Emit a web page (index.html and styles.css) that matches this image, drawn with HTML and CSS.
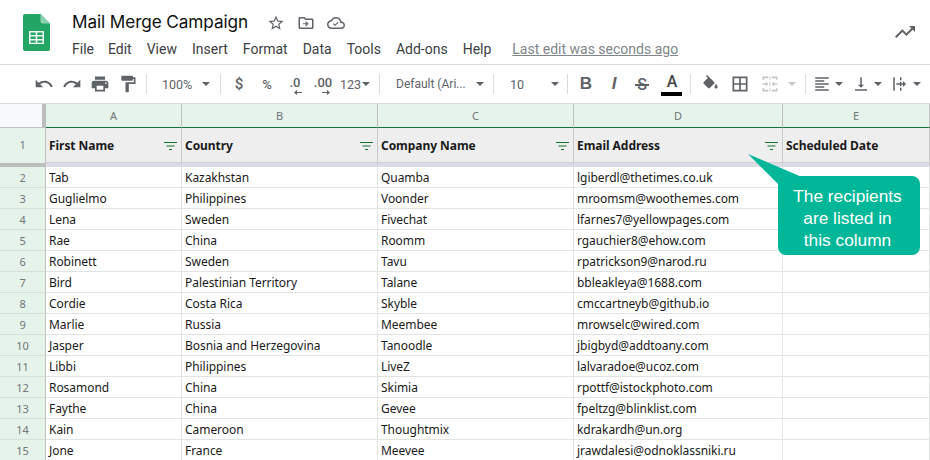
FILE: index.html
```html
<!DOCTYPE html>
<html lang="en">
<head>
  <meta charset="UTF-8">
  <title>Mail Merge Campaign</title>
  <link rel="stylesheet" href="styles.css">
</head>
<body>
  <header class="topbar">
    <svg class="logo" width="27" height="37" viewBox="0 0 27 37">
      <path d="M2 0h15.500l9.500 9.500v25.500a2 2 0 0 1-2 2h-23a2 2 0 0 1-2-2v-33a2 2 0 0 1 2-2z" fill="#23a566"/>
      <path d="M17.500 0l9.500 9.500h-7.500a2 2 0 0 1-2-2z" fill="#8ed1b1"/>
      <path d="M6 17h15v13h-15z M7.500 18.500v2.500h5.200v-2.500z M14.300 18.500v2.500h5.200v-2.500z M7.500 22.500v2.500h5.200v-2.500z M14.300 22.500v2.500h5.200v-2.500z M7.500 26.500v2.200h5.200v-2.200z M14.300 26.500v2.200h5.200v-2.200z" fill="#f1f8f4" fill-rule="evenodd"/>
    </svg>
    <div class="doc">
      <div class="title-row">
        <h1>Mail Merge Campaign</h1>
        <svg class="title-icon" width="18" height="18" viewBox="0 0 24 24"><path d="M22 9.240l-7.190-.62L12 2 9.190 8.630 2 9.240l5.460 4.730L5.820 21 12 17.270 18.180 21l-1.630-7.030L22 9.240zM12 15.400l-3.760 2.270 1-4.280-3.320-2.880 4.380-.38L12 6.100l1.710 4.040 4.380.38-3.320 2.880 1 4.280L12 15.400z"/></svg>
        <svg class="title-icon" width="18" height="18" viewBox="0 0 24 24"><path d="M20 6h-8l-2-2H4c-1.100 0-2 .9-2 2v12c0 1.100.9 2 2 2h16c1.100 0 2-.9 2-2V8c0-1.100-.9-2-2-2zm0 12H4V6h5.170l2 2H20v10zM12 9.500l-1.100 1.100 1.600 1.600H8v1.600h4.500l-1.600 1.600 1.100 1.100 3.500-3.500z"/></svg>
        <svg class="title-icon" width="18" height="18" viewBox="0 0 24 24"><path d="M19.350 10.040C18.670 6.590 15.640 4 12 4 9.110 4 6.600 5.640 5.350 8.040 2.340 8.360 0 10.910 0 14c0 3.310 2.690 6 6 6h13c2.760 0 5-2.240 5-5 0-2.640-2.050-4.780-4.650-4.960zM19 18H6c-2.210 0-4-1.790-4-4s1.790-4 4-4h.71C7.370 7.690 9.480 6 12 6c3.040 0 5.500 2.460 5.500 5.500v.5H19c1.660 0 3 1.340 3 3s-1.340 3-3 3zm-8.500-1.900l-2.700-2.700 1.100-1.100 1.600 1.600 3.900-3.300 1 1.200z"/></svg>
      </div>
      <nav class="menu">
        <span class="menu-file">File</span><span>Edit</span><span>View</span><span>Insert</span><span>Format</span><span>Data</span><span>Tools</span><span>Add-ons</span><span>Help</span>
        <a class="last-edit">Last edit was seconds ago</a>
      </nav>
    </div>
    <svg class="trend" width="24" height="24" viewBox="0 0 24 24"><path d="M16 6l2.290 2.290-4.880 4.880-4-4L2 16.590 3.410 18l6-6 4 4 6.300-6.290L22 12V6z"/></svg>
  </header>

  <div class="toolbar">
    <span class="btn"><svg width="20" height="20" viewBox="0 0 24 24"><path d="M12.500 8c-2.650 0-5.050.99-6.900 2.600L2 7v9h9l-3.620-3.620c1.390-1.160 3.160-1.880 5.120-1.880 3.540 0 6.550 2.310 7.600 5.500l2.370-.78C21.080 11.030 17.150 8 12.500 8z"/></svg></span>
    <span class="btn"><svg width="20" height="20" viewBox="0 0 24 24"><path d="M18.400 10.600C16.550 8.990 14.150 8 11.500 8c-4.650 0-8.580 3.030-9.960 7.220L3.900 16c1.050-3.190 4.050-5.500 7.600-5.500 1.950 0 3.730.72 5.120 1.880L13 16h9V7l-3.600 3.600z"/></svg></span>
    <span class="btn"><svg width="20" height="20" viewBox="0 0 24 24"><path d="M19 8H5c-1.660 0-3 1.340-3 3v6h4v4h12v-4h4v-6c0-1.660-1.340-3-3-3zm-3 11H8v-5h8v5zm3-7c-.55 0-1-.45-1-1s.45-1 1-1 1 .45 1 1-.45 1-1 1zm-1-9H6v4h12V3z"/></svg></span>
    <span class="btn"><svg width="20" height="20" viewBox="0 0 24 24"><path d="M18 4V3c0-.55-.45-1-1-1H5c-.55 0-1 .45-1 1v4c0 .55.45 1 1 1h12c.55 0 1-.45 1-1V6h1v4H9v11c0 .55.45 1 1 1h2c.55 0 1-.45 1-1v-9h8V4h-3z"/></svg></span>
    <i class="sep"></i>
    <span class="pick zoom-pick">100%<b class="caret"></b></span>
    <i class="sep"></i>
    <span class="btn txt">$</span>
    <span class="btn txt small">%</span>
    <span class="btn txt small dec">.0<svg class="dec-arrow" width="8" height="5" viewBox="0 0 8 5"><path d="M0 2.500l3-2.500v2h5v1h-5v2z"/></svg></span>
    <span class="btn txt small dec">.00<svg class="dec-arrow" width="8" height="5" viewBox="0 0 8 5"><path d="M8 2.500l-3-2.500v2h-5v1h5v2z"/></svg></span>
    <span class="pick num-pick">123<b class="caret"></b></span>
    <i class="sep"></i>
    <span class="pick font-pick">Default (Ari...<b class="caret"></b></span>
    <i class="sep"></i>
    <span class="pick size-pick">10<b class="caret"></b></span>
    <i class="sep"></i>
    <span class="btn txt bold">B</span>
    <span class="btn txt italic">I</span>
    <span class="btn txt strike">S</span>
    <span class="btn txt color">A</span>
    <i class="sep"></i>
    <span class="btn wide"><svg width="19" height="19" viewBox="0 0 24 24"><path d="M16.560 8.940L7.620 0 6.210 1.410l2.380 2.380-5.150 5.150c-.59.59-.59 1.540 0 2.120l5.500 5.500c.29.29.68.44 1.060.44s.77-.15 1.060-.44l5.500-5.500c.59-.58.59-1.530 0-2.120zM19 11.500s-2 2.170-2 3.500c0 1.100.9 2 2 2s2-.9 2-2c0-1.330-2-3.500-2-3.500z"/></svg></span>
    <span class="btn wide"><svg width="20" height="20" viewBox="0 0 24 24"><path d="M3 3v18h18V3H3zm8 16H5v-6h6v6zm0-8H5V5h6v6zm8 8h-6v-6h6v6zm0-8h-6V5h6v6z"/></svg></span>
    <span class="btn wide off"><svg width="20" height="20" viewBox="0 0 24 24"><path d="M3 3h7v2h-5v2h-2zM14 3h7v4h-2v-2h-5zM3 17h2v2h5v2h-7zM19 17h2v4h-7v-2h5zM3 11h4v-2l3 3-3 3v-2h-4zM21 11h-4v-2l-3 3 3 3v-2h4zM11.500 3h1v4h-1zM11.500 9h1v6h-1zM11.500 17h1v4h-1z"/></svg></span>
    <b class="caret off-caret"></b>
    <i class="sep"></i>
    <span class="btn-drop"><svg width="18" height="18" viewBox="0 0 24 24"><path d="M15 15H3v2h12v-2zm0-8H3v2h12V7zM3 13h18v-2H3v2zm0 8h18v-2H3v2zM3 3v2h18V3H3z"/></svg><b class="caret"></b></span>
    <span class="btn-drop"><svg width="18" height="18" viewBox="0 0 24 24"><path d="M16 13h-3V3h-2v10H8l4 4 4-4zM4 19v2h16v-2H4z"/></svg><b class="caret"></b></span>
    <span class="btn-drop"><svg width="18" height="18" viewBox="0 0 24 24"><path d="M3 3h2v18h-2zM12 3h2v4h-2zM12 9h2v2h-2zM12 17h2v4h-2zM12 13h2v2h-2zM7 11h9v-3l4 4-4 4v-3h-9z"/></svg><b class="caret"></b></span>
  </div>

  <div class="sheet">
    <table>
      <colgroup>
        <col class="c-head"><col class="c-a"><col class="c-b"><col class="c-c"><col class="c-d"><col class="c-e">
      </colgroup>
      <thead>
        <tr class="col-letters">
          <th class="corner"></th><th>A</th><th>B</th><th>C</th><th>D</th><th>E</th>
        </tr>
      </thead>
      <tbody>
        <tr class="frozen">
          <th>1</th>
          <td>First Name<svg class="filter" width="13" height="8" viewBox="0 0 13 8"><path d="M0 0h13v1h-13zM2.500 3.500h8v1h-8zM5 7h3v1h-3z"/></svg></td>
          <td>Country<svg class="filter" width="13" height="8" viewBox="0 0 13 8"><path d="M0 0h13v1h-13zM2.500 3.500h8v1h-8zM5 7h3v1h-3z"/></svg></td>
          <td>Company Name<svg class="filter" width="13" height="8" viewBox="0 0 13 8"><path d="M0 0h13v1h-13zM2.500 3.500h8v1h-8zM5 7h3v1h-3z"/></svg></td>
          <td>Email Address<svg class="filter" width="13" height="8" viewBox="0 0 13 8"><path d="M0 0h13v1h-13zM2.500 3.500h8v1h-8zM5 7h3v1h-3z"/></svg></td>
          <td>Scheduled Date</td>
        </tr>
        <tr><th>2</th><td>Tab</td><td>Kazakhstan</td><td>Quamba</td><td>lgiberdl@thetimes.co.uk</td><td></td></tr>
        <tr><th>3</th><td>Guglielmo</td><td>Philippines</td><td>Voonder</td><td>mroomsm@woothemes.com</td><td></td></tr>
        <tr><th>4</th><td>Lena</td><td>Sweden</td><td>Fivechat</td><td>lfarnes7@yellowpages.com</td><td></td></tr>
        <tr><th>5</th><td>Rae</td><td>China</td><td>Roomm</td><td>rgauchier8@ehow.com</td><td></td></tr>
        <tr><th>6</th><td>Robinett</td><td>Sweden</td><td>Tavu</td><td>rpatrickson9@narod.ru</td><td></td></tr>
        <tr><th>7</th><td>Bird</td><td>Palestinian Territory</td><td>Talane</td><td>bbleakleya@1688.com</td><td></td></tr>
        <tr><th>8</th><td>Cordie</td><td>Costa Rica</td><td>Skyble</td><td>cmccartneyb@github.io</td><td></td></tr>
        <tr><th>9</th><td>Marlie</td><td>Russia</td><td>Meembee</td><td>mrowselc@wired.com</td><td></td></tr>
        <tr><th>10</th><td>Jasper</td><td>Bosnia and Herzegovina</td><td>Tanoodle</td><td>jbigbyd@addtoany.com</td><td></td></tr>
        <tr><th>11</th><td>Libbi</td><td>Philippines</td><td>LiveZ</td><td>lalvaradoe@ucoz.com</td><td></td></tr>
        <tr><th>12</th><td>Rosamond</td><td>China</td><td>Skimia</td><td>rpottf@istockphoto.com</td><td></td></tr>
        <tr><th>13</th><td>Faythe</td><td>China</td><td>Gevee</td><td>fpeltzg@blinklist.com</td><td></td></tr>
        <tr><th>14</th><td>Kain</td><td>Cameroon</td><td>Thoughtmix</td><td>kdrakardh@un.org</td><td></td></tr>
        <tr><th>15</th><td>Jone</td><td>France</td><td>Meevee</td><td>jrawdalesi@odnoklassniki.ru</td><td></td></tr>
      </tbody>
    </table>

    <div class="callout">
      <svg class="callout-tail" width="60" height="30" viewBox="0 0 60 30"><path d="M0 0l54 23h6v7h-30z"/></svg>
      <p>The recipients<br>are listed in<br>this column</p>
    </div>
  </div>
</body>
</html>
```

FILE: styles.css
```css
* {
  box-sizing: border-box;
}
html, body {
  height: 100%;
}
body {
  margin: 0;
  overflow: hidden;
  background: #fff;
  font-family: "Roboto", "Liberation Sans", sans-serif;
  color: #3c4043;
}

/* top bar */
.topbar {
  display: flex;
  height: 65px;
  padding: 14px 13px 0 23px;
  border-bottom: 1px solid #dadce0;
}
.logo {
  flex: none;
  margin-right: 22px;
}
.doc {
  flex: 1;
  margin-top: -5px;
}
.title-row {
  display: flex;
  align-items: center;
  height: 24px;
}
h1 {
  margin: 0 19px 0 0;
  font-family: "Inter", "Roboto", sans-serif;
  font-size: 17.200px;
  font-weight: 400;
  letter-spacing: -0.1px;
  color: #111;
}
.title-icon {
  margin: 4px 12px 0 0;
  fill: #5f6368;
}
.menu {
  display: flex;
  align-items: center;
  gap: 15px;
  margin-top: 8px;
  font-size: 14px;
  color: #3c4043;
}
.menu-file {
  margin-right: -1px;
}
.last-edit {
  margin-left: 6px;
  color: #80868b;
  text-decoration: underline;
}
.trend {
  fill: #5f6368;
  margin-top: 6px;
}

/* toolbar */
.toolbar {
  display: flex;
  align-items: center;
  height: 39px;
  padding-left: 30px;
  border-bottom: 1px solid #dadce0;
  font-size: 13px;
  color: #5f6368;
}
.toolbar svg {
  fill: #5f6368;
}
.btn {
  display: flex;
  align-items: center;
  justify-content: center;
  flex: none;
  width: 28px;
  height: 28px;
  position: relative;
}
.btn.wide {
  width: 30px;
}
.btn.off svg {
  fill: #c4c6c9;
}
.txt {
  font-size: 15px;
  font-weight: 500;
}
.txt.small {
  font-size: 13px;
}
.dec {
  padding-bottom: 3px;
}
.dec-arrow {
  position: absolute;
  left: 13px;
  bottom: 3px;
}
.bold {
  font-family: "Liberation Sans", sans-serif;
  font-size: 17px;
  font-weight: 700;
}
.italic {
  font-family: "Liberation Sans", sans-serif;
  font-size: 17px;
  font-weight: 700;
  font-style: italic;
}
.strike {
  font-size: 16px;
}
.strike::after {
  content: "";
  position: absolute;
  left: 7px;
  right: 7px;
  top: 14px;
  height: 2px;
  background: #5f6368;
}
.color {
  margin-left: 2px;
  font-size: 16px;
  padding-bottom: 5px;
  color: #444;
}
.color::after {
  content: "";
  position: absolute;
  left: 3px;
  right: 4px;
  bottom: 2px;
  height: 4px;
  background: #000;
}
.sep {
  flex: none;
  width: 1px;
  height: 20px;
  margin: 0 4px;
  background: #dadce0;
}
.pick {
  display: flex;
  align-items: center;
  justify-content: space-between;
  flex: none;
  font-size: 12.500px;
}
.zoom-pick {
  width: 65px;
  padding: 0 6px 0 11px;
}
.num-pick {
  width: 35px;
  padding-right: 5px;
  margin-left: 3px;
}
.font-pick {
  width: 105px;
  padding: 0 5px 0 12px;
  font-size: 12px;
}
.size-pick {
  width: 65px;
  padding: 0 4px 0 12px;
}
.caret {
  display: inline-block;
  flex: none;
  width: 0;
  height: 0;
  border-left: 4px solid transparent;
  border-right: 4px solid transparent;
  border-top: 4px solid #5f6368;
}
.off-caret {
  margin-left: 3px;
  margin-right: 5px;
  border-top-color: #c4c6c9;
}
.btn-drop {
  display: flex;
  align-items: center;
  gap: 4px;
  flex: none;
  width: 39px;
  padding-left: 3px;
}

/* sheet */
.sheet {
  position: relative;
}
table {
  width: 930px;
  table-layout: fixed;
  border-collapse: separate;
  border-spacing: 0;
  font-family: "Noto Sans", "Open Sans", sans-serif;
  font-size: 12px;
  letter-spacing: -0.05px;
  color: #1a1a1a;
}
.c-head { width: 46px; }
.c-a { width: 136px; }
.c-b { width: 196px; }
.c-c { width: 196px; }
.c-d { width: 209px; }
.c-e { width: 147px; }

th, td {
  height: 21px;
  padding: 0;
  border-right: 1px solid #e2e3e3;
  border-bottom: 1px solid #e2e3e3;
  overflow: hidden;
  white-space: nowrap;
}
td {
  padding-left: 3px;
}
tbody th {
  font-size: 11px;
  font-weight: 400;
  color: #70757a;
  background: #e6f3ea;
  border-right: 1px solid #c0c0c0;
  border-bottom-color: #d5dfd8;
}
.col-letters th {
  height: 24px;
  font-size: 11px;
  font-weight: 400;
  color: #70757a;
  background: #e6f3ea;
  border-right-color: #c0c0c0;
  border-bottom: 1px solid #137333;
}
.col-letters .corner {
  background: #f8f9fa;
  border-right: 4px solid #bdbdbd;
  border-bottom-color: #c0c0c0;
}
.frozen td {
  position: relative;
  height: 39px;
  font-weight: 700;
  background: #eee;
  border-right-color: #c9c9c9;
  border-bottom: 4px solid #dadce6;
  box-shadow: inset 0 -1px #cfcfcf;
}
.frozen th {
  height: 39px;
  padding-bottom: 2px;
  border-bottom: 4px solid #bdbdbd;
}
.filter {
  position: absolute;
  right: 4px;
  top: 14px;
  fill: #137333;
}

/* callout over the grid */
.callout {
  position: absolute;
  left: 778px;
  top: 72px;
  width: 142px;
  height: 79px;
  border-radius: 8px;
  background: #00b899;
}
.callout-tail {
  position: absolute;
  left: -30px;
  top: -22px;
  fill: #00b899;
}
.callout p {
  position: relative;
  margin: 8px 0 0;
  padding: 1px 3px 0 0;
  font-family: "Liberation Sans", sans-serif;
  font-size: 17.300px;
  line-height: 22px;
  text-align: center;
  color: #fff;
}
```
